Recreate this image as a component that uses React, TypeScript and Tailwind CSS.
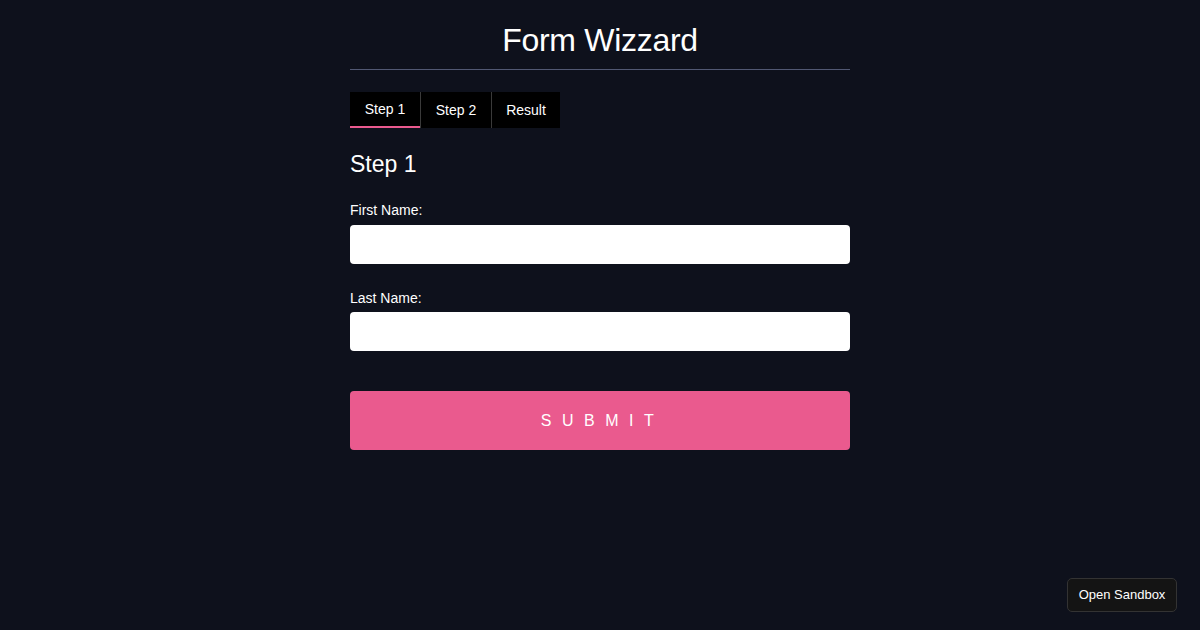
import React from "react";

export default function App() {
  return (
    <div className="w-[1200px] h-[630px] bg-[#0e111c] text-white relative overflow-hidden" style={{ fontFamily: '"Liberation Sans", Arial, sans-serif' }}>
      <div className="w-[500px] mx-auto pt-[20px] flex flex-col">
        <h1 className="text-[32px] leading-[40px] text-center text-white tracking-[-0.3px]">Form Wizzard</h1>
        <div className="mt-[9px] h-px bg-[#515873]" />
        <div className="mt-[22px] flex">
          <div className="w-[70px] h-[36px] bg-black flex items-center justify-center text-[14px] leading-[14px] pb-[1px] border-b-2 border-[#ea5a8e]">Step 1</div>
          <div className="w-px h-[36px] bg-[#3a3a3a]" />
          <div className="w-[70px] h-[36px] bg-black flex items-center justify-center text-[14px] leading-[14px] pb-[1px]">Step 2</div>
          <div className="w-px h-[36px] bg-[#3a3a3a]" />
          <div className="w-[68px] h-[36px] bg-black flex items-center justify-center text-[14px] leading-[14px] pb-[1px]">Result</div>
        </div>
        <h2 className="mt-[21px] text-[23px] leading-[30px]">Step 1</h2>
        <label className="mt-[23px] text-[14px] leading-[16px]">First Name:</label>
        <input className="mt-[7px] h-[39px] bg-white rounded-[4px] outline-none text-black px-3" />
        <label className="mt-[26px] text-[14px] leading-[16px]">Last Name:</label>
        <input className="mt-[6px] h-[39px] bg-white rounded-[4px] outline-none text-black px-3" />
        <button className="mt-[40px] h-[59px] bg-[#ea5a8e] rounded-[4px] text-[16px] tracking-[10.5px] pl-[5px] text-white">SUBMIT</button>
      </div>
      <button className="absolute left-[1067px] top-[578px] w-[110px] h-[34px] bg-[#141414] border border-[#333] rounded-[5px] text-[13px] text-white">Open Sandbox</button>
    </div>
  );
}
